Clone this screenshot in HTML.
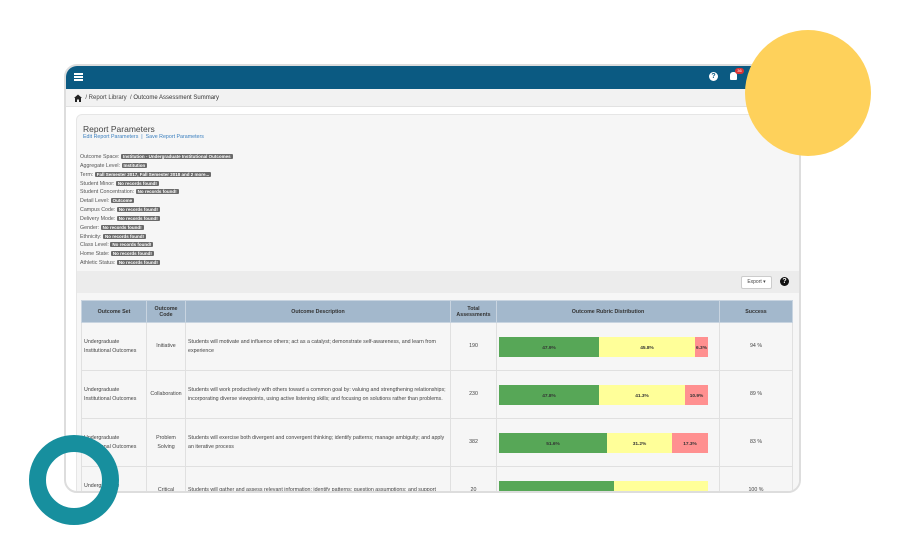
<!DOCTYPE html>
<html><head><meta charset="utf-8"><style>
*{box-sizing:border-box;margin:0;padding:0}
body{width:900px;height:556px;background:#fff;position:relative;overflow:hidden;font-family:"Liberation Sans",sans-serif;color:#444}
.win{position:absolute;left:64px;top:64px;width:737px;height:429px;border:2px solid #ddd;border-radius:13px;overflow:hidden;background:#fff}
.nav{height:23px;background:#0b5a82;position:relative}
.crumb{height:18px;background:#f2f2f2;border-bottom:1px solid #e2e2e2;font-size:6px;line-height:18px;padding-left:8px;color:#444}
.panel{position:absolute;left:10px;top:48px;width:730px;height:400px;background:#f6f6f6;border:1px solid #e6e6e6;border-radius:6px}
.lbl{font-size:5.3px;line-height:8.85px;color:#555}
.tag{background:#6a6a6a;color:#fff;font-size:4.5px;padding:0 2px;border-radius:1px;font-weight:bold}
.bar{position:absolute;left:0;right:0;top:156px;height:22px;background:#ececec}
table{position:absolute;left:4px;top:185px;border-collapse:collapse;font-size:5.3px;table-layout:fixed;width:711px}
th{background:#a3b8cc;height:22px;font-weight:bold;color:#333;border:1px solid #c8d4e0;text-align:center;font-size:5.3px}
td{height:48px;border:1px solid #e0e0e0;vertical-align:middle;padding:0 2px;line-height:9px;background:#f6f6f6}
.c{text-align:center}
.d{position:relative;height:20px}
.d span{position:absolute;top:0;height:20px;font-size:4.8px;font-weight:bold;line-height:24px;text-align:center;color:#333}
.g{background:#57a757}.y{background:#ffff99}.r{background:#ff9090}
</style></head><body>
<div class="win">
<div class="nav">
<div style="position:absolute;left:8px;top:7px;width:9px;height:1.5px;background:#fff;box-shadow:0 3px 0 #fff,0 6px 0 #fff"></div>
<div style="position:absolute;left:643px;top:6px;width:9px;height:9px;border-radius:50%;background:#fff;color:#0b5a82;font-size:7px;font-weight:bold;text-align:center;line-height:9px">?</div>
<div style="position:absolute;left:664px;top:6px;width:7px;height:8px;background:#fff;border-radius:3px 3px 1px 1px"></div>
<div style="position:absolute;left:669px;top:2px;width:9px;height:6px;background:#d33;border-radius:3px;color:#fff;font-size:4px;text-align:center;line-height:6px">36</div>
</div>
<div class="crumb"><span style="display:inline-block;width:8px;height:8px;vertical-align:middle;position:relative;top:-1px"><svg width="8" height="8" viewBox="0 0 8 8"><path d="M0 4L4 0.5L8 4H7V8H5V5.5H3V8H1V4Z" fill="#222"/></svg></span> &nbsp;/ Report Library &nbsp;/ <span style="color:#333">Outcome Assessment Summary</span></div>
<div class="panel">
<div style="position:absolute;left:6px;top:9px;font-size:8.5px;color:#444">Report Parameters</div>
<div style="position:absolute;left:6px;top:19px;font-size:5.3px;color:#3a7fbf">Edit Report Parameters &nbsp;|&nbsp; Save Report Parameters</div>
<div class="lbl" style="position:absolute;left:3px;top:38px">
Outcome Space: <span class="tag">Institution - Undergraduate Institutional Outcomes</span><br>
Aggregate Level: <span class="tag">Institution</span><br>
Term: <span class="tag">Fall Semester 2017, Fall Semester 2018 and 2 more...</span><br>
Student Minor: <span class="tag">No records found!</span><br>
Student Concentration: <span class="tag">No records found!</span><br>
Detail Level: <span class="tag">Outcome</span><br>
Campus Code: <span class="tag">No records found!</span><br>
Delivery Mode: <span class="tag">No records found!</span><br>
Gender: <span class="tag">No records found!</span><br>
Ethnicity: <span class="tag">No records found!</span><br>
Class Level: <span class="tag">No records found!</span><br>
Home State: <span class="tag">No records found!</span><br>
Athletic Status: <span class="tag">No records found!</span></div>
<div class="bar">
<div style="position:absolute;left:664px;top:5px;width:31px;height:13px;background:#fff;border:1px solid #ccc;border-radius:2px;font-size:5px;text-align:center;line-height:11px">Export ▾</div>
<div style="position:absolute;left:703px;top:6px;width:9px;height:9px;border-radius:50%;background:#111;color:#fff;font-size:7px;font-weight:bold;text-align:center;line-height:9px">?</div>
</div>
<table>
<colgroup><col style="width:65px"><col style="width:39px"><col style="width:265px"><col style="width:46px"><col style="width:223px"><col style="width:73px"></colgroup>
<tr><th>Outcome Set</th><th>Outcome<br>Code</th><th>Outcome Description</th><th>Total<br>Assessments</th><th>Outcome Rubric Distribution</th><th>Success</th></tr>
<tr><td>Undergraduate<br>Institutional Outcomes</td><td class="c">Initiative</td><td>Students will motivate and influence others; act as a catalyst; demonstrate self-awareness, and learn from experience</td><td class="c">190</td><td><div class="d"><span class="g" style="left:0;width:100px">47.9%</span><span class="y" style="left:100px;width:96px">45.8%</span><span class="r" style="left:196px;width:13px">6.3%</span></div></td><td class="c">94 %</td></tr>
<tr><td>Undergraduate<br>Institutional Outcomes</td><td class="c">Collaboration</td><td>Students will work productively with others toward a common goal by: valuing and strengthening relationships; incorporating diverse viewpoints, using active listening skills; and focusing on solutions rather than problems.</td><td class="c">230</td><td><div class="d"><span class="g" style="left:0;width:100px">47.8%</span><span class="y" style="left:100px;width:86px">41.3%</span><span class="r" style="left:186px;width:23px">10.9%</span></div></td><td class="c">89 %</td></tr>
<tr><td>Undergraduate<br>Institutional Outcomes</td><td class="c">Problem<br>Solving</td><td>Students will exercise both divergent and convergent thinking; identify patterns; manage ambiguity; and apply an iterative process</td><td class="c">382</td><td><div class="d"><span class="g" style="left:0;width:108px">51.6%</span><span class="y" style="left:108px;width:65px">31.2%</span><span class="r" style="left:173px;width:36px">17.3%</span></div></td><td class="c">83 %</td></tr>
<tr><td>Undergraduate<br>Institutional Outcomes</td><td class="c">Critical</td><td>Students will gather and assess relevant information; identify patterns; question assumptions; and support</td><td class="c">20</td><td><div class="d"><span class="g" style="left:0;width:115px"></span><span class="y" style="left:115px;width:94px"></span></div></td><td class="c">100 %</td></tr>
</table>
</div>
</div>
<div style="position:absolute;left:745px;top:30px;width:126px;height:126px;border-radius:50%;background:#fed15b"></div>
<div style="position:absolute;left:29px;top:435px;width:90px;height:90px;border-radius:50%;border:17px solid #178f9e"></div>
</body></html>
